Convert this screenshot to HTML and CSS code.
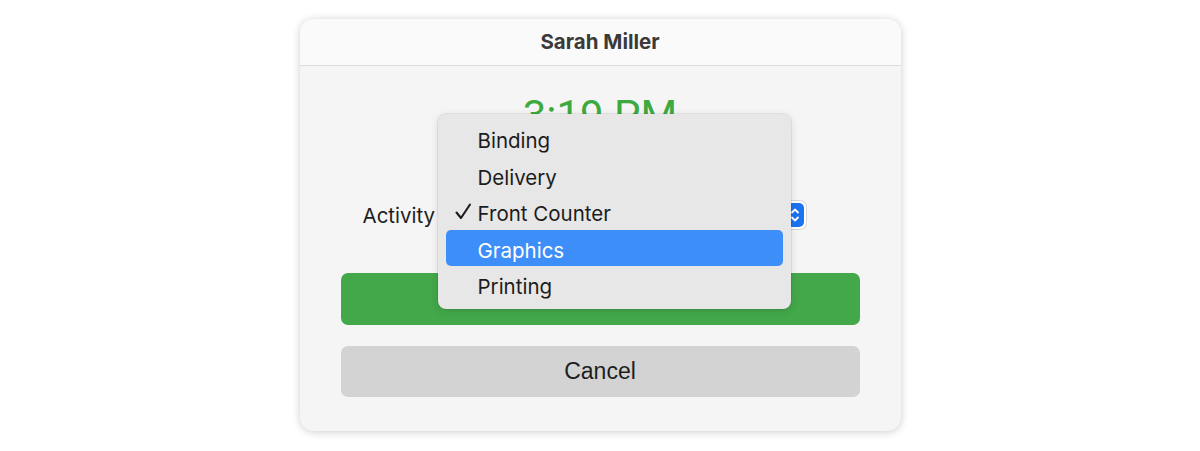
FILE: index.html
```html
<!DOCTYPE html>
<html>
<head>
<meta charset="utf-8">
<link rel="stylesheet" href="styles.css">
</head>
<body>
<div class="dialog">
  <div class="header">Sarah Miller</div>
  <div class="content">
    <div class="time">3:19 PM</div>
    <div class="activity-row">
      <span class="label">Activity</span>
      <div class="popup">
        <span class="popup-value">Front Counter</span>
        <span class="stepper">
          <svg width="16" height="22" viewBox="0 0 16 22"><path d="M5 8.5 L8 5.5 L11 8.5 M5 13.5 L8 16.5 L11 13.5" fill="none" stroke="#fff" stroke-width="1.8" stroke-linecap="round" stroke-linejoin="round"/></svg>
        </span>
        <div class="menu">
          <div class="item">Binding</div>
          <div class="item">Delivery</div>
          <div class="item checked"><svg class="check" width="18" height="18" viewBox="0 0 18 18"><path d="M2.5 9.5 L7 15 L16 1.5" fill="none" stroke="#1c1c1c" stroke-width="2.1" stroke-linecap="round" stroke-linejoin="round"/></svg>Front Counter</div>
          <div class="item selected">Graphics</div>
          <div class="item">Printing</div>
        </div>
      </div>
    </div>
    <div class="btn primary"></div>
    <div class="btn cancel">Cancel</div>
  </div>
</div>
</body>
</html>
```
FILE: styles.css
```css
html, body {
  margin: 0;
  padding: 0;
  background: #ffffff;
}
body {
  width: 1200px;
  height: 451px;
  display: flex;
  justify-content: center;
  padding-top: 19px;
  box-sizing: border-box;
  font-family: Inter, "Liberation Sans", sans-serif;
}
.dialog {
  width: 601px;
  height: 412px;
  background: #f5f5f5;
  border-radius: 14px;
  box-shadow: 0 1px 8px rgba(0,0,0,0.2);
  display: flex;
  flex-direction: column;
}
.header {
  height: 47px;
  box-sizing: border-box;
  border-bottom: 1px solid #dcdcdc;
  background: #fafafa;
  border-radius: 14px 14px 0 0;
  display: flex;
  align-items: center;
  justify-content: center;
  font-family: Inter, "Liberation Sans", sans-serif;
  font-weight: 700;
  font-size: 20.5px;
  color: #3a3a3a;
  padding-bottom: 1px;
}
.content {
  padding: 0 41px;
  display: flex;
  flex-direction: column;
}
.time {
  margin-top: 25px;
  height: 40px;
  text-align: center;
  font-family: Roboto, "Liberation Sans", sans-serif;
  font-size: 42px;
  line-height: 50px;
  color: #3daa3f;
}
.activity-row {
  margin-top: 70px;
  display: flex;
  align-items: center;
  padding-left: 22px;
  height: 28px;
}
.label {
  font-size: 20.5px;
  color: #1e1e1e;
  width: 83px;
}
.popup {
  position: relative;
  width: 360px;
  height: 28px;
  background: #ffffff;
  border-radius: 6px;
  box-shadow: 0 0 0 1px #d8d8d8;
  display: flex;
  align-items: center;
  justify-content: space-between;
  padding: 0 2px 0 10px;
  box-sizing: border-box;
}
.popup-value {
  font-size: 15px;
  color: #222;
}
.stepper {
  width: 17px;
  height: 24px;
  background: #1a73f0;
  border-radius: 5px;
  display: flex;
  align-items: center;
  justify-content: center;
}
.menu {
  position: absolute;
  left: -8px;
  top: -87px;
  width: 353px;
  background: #e7e7e7;
  border-radius: 8px;
  box-shadow: 0 0 0 1px rgba(0,0,0,0.06), 0 2px 8px rgba(0,0,0,0.12);
  padding: 6px 8px;
  box-sizing: border-box;
  z-index: 5;
}
.item {
  position: relative;
  box-sizing: border-box;
  height: 36.6px;
  padding-top: 5px;
  line-height: 31.6px;
  padding-left: 32px;
  font-size: 20.5px;
  color: #1c1c1c;
  border-radius: 5px;
}
.check {
  position: absolute;
  left: 8px;
  top: 10px;
}
.item.selected {
  background: #3d8ef8;
  color: #ffffff;
}
.btn {
  border-radius: 7px;
}
.primary {
  margin-top: 44px;
  height: 52px;
  background: #43a84a;
}
.cancel {
  margin-top: 21px;
  height: 51px;
  background: #d3d3d3;
  display: flex;
  align-items: center;
  justify-content: center;
  font-family: "Liberation Sans", Arial, sans-serif;
  font-size: 23px;
  color: #1e1e1e;
}
```
